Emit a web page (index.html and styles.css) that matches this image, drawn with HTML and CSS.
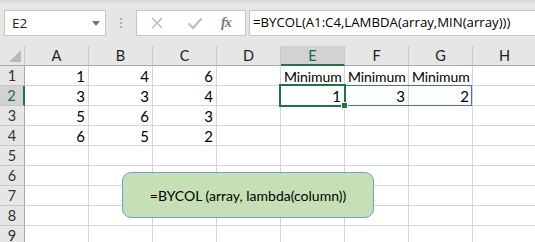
FILE: index.html
```
<!DOCTYPE html>
<html lang="en">
<head>
<meta charset="UTF-8">
<title>BYCOL</title>
<link rel="stylesheet" href="styles.css">
</head>
<body>

<!-- pasek formuły -->
<div class="fbar">
  <div class="namebox"><span>E2</span><i class="caret"></i></div>
  <div class="grip"><b></b><b></b><b></b></div>
  <div class="fbtns">
    <svg class="ico" width="14" height="14" viewBox="0 0 14 14"><path d="M2 2L12 12M12 2L2 12" stroke="#bdbdbd" stroke-width="1.6" fill="none"/></svg>
    <svg class="ico" width="16" height="14" viewBox="0 0 16 14"><path d="M1.5 7.5L6 12L14.5 2.5" stroke="#bdbdbd" stroke-width="2.2" fill="none"/></svg>
    <span class="fx">fx</span>
  </div>
  <div class="finput">=BYCOL(A1:C4,LAMBDA(array,MIN(array)))</div>
</div>

<!-- arkusz -->
<div class="sheet">
  <div class="grid">
    <div class="hd corner"><i></i></div>
    <div class="hd">A</div><div class="hd">B</div><div class="hd">C</div><div class="hd">D</div>
    <div class="hd sel">E</div><div class="hd">F</div><div class="hd">G</div><div class="hd">H</div>

    <div class="rh">1</div>
    <div class="c n">1</div><div class="c n">4</div><div class="c n">6</div><div class="c"></div>
    <div class="c t">Minimum</div><div class="c t">Minimum</div><div class="c t">Minimum</div><div class="c"></div>

    <div class="rh sel">2</div>
    <div class="c n">3</div><div class="c n">3</div><div class="c n">4</div><div class="c"></div>
    <div class="c n active">1<span class="spill"></span><span class="cursor"><i></i></span></div><div class="c n">3</div><div class="c n">2</div><div class="c"></div>

    <div class="rh">3</div>
    <div class="c n">5</div><div class="c n">6</div><div class="c n">3</div><div class="c"></div>
    <div class="c"></div><div class="c"></div><div class="c"></div><div class="c"></div>

    <div class="rh">4</div>
    <div class="c n">6</div><div class="c n">5</div><div class="c n">2</div><div class="c"></div>
    <div class="c"></div><div class="c"></div><div class="c"></div><div class="c"></div>

    <div class="rh">5</div>
    <div class="c"></div><div class="c"></div><div class="c"></div><div class="c"></div>
    <div class="c"></div><div class="c"></div><div class="c"></div><div class="c"></div>

    <div class="rh">6</div>
    <div class="c"></div><div class="c"></div><div class="c"></div><div class="c"></div>
    <div class="c"></div><div class="c"></div><div class="c"></div><div class="c"></div>

    <div class="rh">7</div>
    <div class="c"></div><div class="c"></div><div class="c"></div><div class="c"></div>
    <div class="c"></div><div class="c"></div><div class="c"></div><div class="c"></div>

    <div class="rh">8</div>
    <div class="c"></div><div class="c"></div><div class="c"></div><div class="c"></div>
    <div class="c"></div><div class="c"></div><div class="c"></div><div class="c"></div>

    <div class="rh">9</div>
    <div class="c"></div><div class="c"></div><div class="c"></div><div class="c"></div>
    <div class="c"></div><div class="c"></div><div class="c"></div><div class="c"></div>
  </div>

  <!-- kształt z opisem -->
  <div class="note">=BYCOL (array, lambda(column))</div>
</div>

</body>
</html>
```
FILE: styles.css
```
/* ─── Reset ─── */
*,*::before,*::after{box-sizing:border-box;margin:0;padding:0}
body{background:#fff;overflow:hidden;font-family:Lato,"Open Sans",sans-serif;color:#000}

/* ─── Pasek formuły ─── */
.fbar{height:46px;background:linear-gradient(#d4d4d4,#e6e6e6 4px);display:flex;align-items:flex-start;padding:10px 0 0 4px;font-family:"Open Sans",sans-serif}
.namebox{width:102px;height:26px;background:#fff;border:1px solid #c6c6c6;display:flex;align-items:center;justify-content:space-between;padding:0 5px 0 7px;font-size:13.5px;color:#222}
.caret{border:4px solid transparent;border-top:5px solid #777;border-bottom:0;width:0;height:0;margin-top:1px}
.grip{width:30px;height:26px;display:flex;flex-direction:column;align-items:center;justify-content:center;gap:2px}
.grip b{width:2px;height:2px;background:#b0b0b0}
.fbtns{width:110px;height:26px;background:#fff;border:1px solid #c6c6c6;display:flex;align-items:center;padding:0 0 0 13px;gap:0}
.fbtns .ico:first-child{margin-right:23px}
.fx{font-family:"Liberation Serif",serif;font-style:italic;font-weight:bold;font-size:14px;color:#777;margin-left:18px;letter-spacing:-1px}
.finput{flex:1;height:26px;margin-left:3px;background:#fff;border:1px solid #c6c6c6;border-right:0;padding:2px 0 0 3px;font-size:13.2px;white-space:nowrap;overflow:hidden}

/* ─── Arkusz ─── */
.sheet{position:relative}
.grid{display:grid;grid-template-columns:25px repeat(8,64px);grid-auto-rows:20px;font-size:15px}
.hd{background:#e6e6e6;border-right:1px solid #c8c8c8;border-bottom:1px solid #ababab;text-align:center;line-height:19px;color:#222;font-size:14.5px}
.hd.sel{background:#d2d2d2;color:#1e6b3e;border-bottom:2px solid #217346;line-height:19px}
.corner{position:relative;background:#e6e6e6}
.corner i{position:absolute;right:3px;bottom:3px;width:0;height:0;border-left:12px solid transparent;border-bottom:12px solid #b8b8b8}
.rh{background:#e6e6e6;border-right:1px solid #ababab;border-bottom:1px solid #c8c8c8;text-align:center;line-height:20px;color:#333;font-size:14.5px}
.rh.sel{background:#d2d2d2;color:#1e6b3e;border-right:2px solid #217346}
.c{border-right:1px solid #d4d4d4;border-bottom:1px solid #d4d4d4;padding:0 3px;line-height:21px;white-space:nowrap}
.c.n{text-align:right}
.c.t{font-size:14px;letter-spacing:-0.1px}
.active{position:relative}
.spill{position:absolute;left:-2px;top:-1px;width:193px;height:21px;border:1px solid #4472c4}
.cursor{position:absolute;left:-2px;top:-2px;right:-2px;bottom:-2px;border:2px solid #217346}
.cursor i{position:absolute;right:-4px;bottom:-4px;width:7px;height:7px;background:#217346;border:1px solid #fff}

/* ─── Kształt ─── */
.note{position:absolute;left:122px;top:126px;width:252px;height:46px;background:#c5e0b4;border:1px solid #6f9fd4;border-radius:9px;display:flex;align-items:center;justify-content:center;font-size:14px;padding-top:1px}
```
